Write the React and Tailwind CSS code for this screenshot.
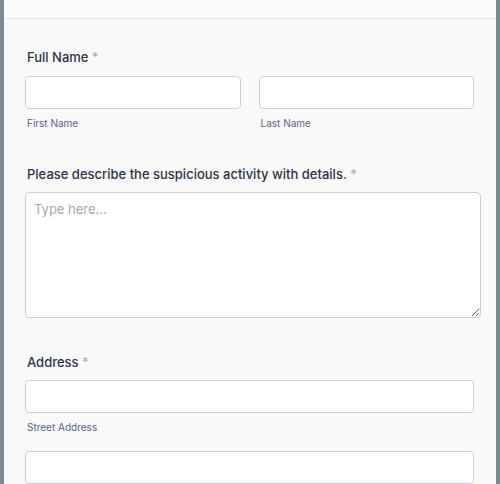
import React from 'react'

const Label = ({ children, className = '' }) => (
  <label className={`block pl-0.5 text-[13px] leading-5 font-medium text-[#2c3345] ${className}`}>
    {children} <span className="font-normal text-[#a5acb8]">*</span>
  </label>
)

const SubLabel = ({ children }) => (
  <span className="block mt-[7px] pl-0.5 text-[10px] leading-[14px] text-[#57647e]">{children}</span>
)

const inputCls =
  'block w-full h-[33px] rounded-[4px] border border-[#c8ceda] bg-white px-2 text-sm outline-none'

export default function App() {
  return (
    <div
      className="flex w-[500px] h-[484px] overflow-hidden bg-[#f9f9fa]"
      style={{ fontFamily: 'Inter, "Noto Sans", sans-serif' }}
    >
      <div className="w-1 shrink-0 bg-[#7b8d92]" />
      <div className="flex-1 min-w-0 flex flex-col">
        <div className="h-[19px] shrink-0 border-b border-[#e4e6ea] bg-[#fbfbfc]" />
        <div className="pl-[21px] pr-[22px] pt-[28px]">
          {/* Full name */}
          <Label>Full Name</Label>
          <div className="mt-[9px] grid grid-cols-2 gap-[18px]">
            <div>
              <input className={inputCls} />
              <SubLabel>First Name</SubLabel>
            </div>
            <div>
              <input className={inputCls} />
              <SubLabel>Last Name</SubLabel>
            </div>
          </div>

          {/* Description */}
          <Label className="mt-[34px]">Please describe the suspicious activity with details.</Label>
          <textarea
            placeholder="Type here..."
            className="mt-2 block w-[456px] h-[126px] rounded-[4px] border border-[#c8ceda] bg-white px-2 pt-1.5 text-[13px] leading-5 text-[#2c3345] placeholder:text-[#a3a8b3] outline-none resize-y"
          />

          {/* Address */}
          <Label className="mt-[34px]">Address</Label>
          <input className={`mt-2 ${inputCls}`} />
          <SubLabel>Street Address</SubLabel>
          <input className={`mt-[17px] ${inputCls}`} />
        </div>
      </div>
      <div className="w-1 shrink-0 bg-[#7b8d92]" />
    </div>
  )
}
